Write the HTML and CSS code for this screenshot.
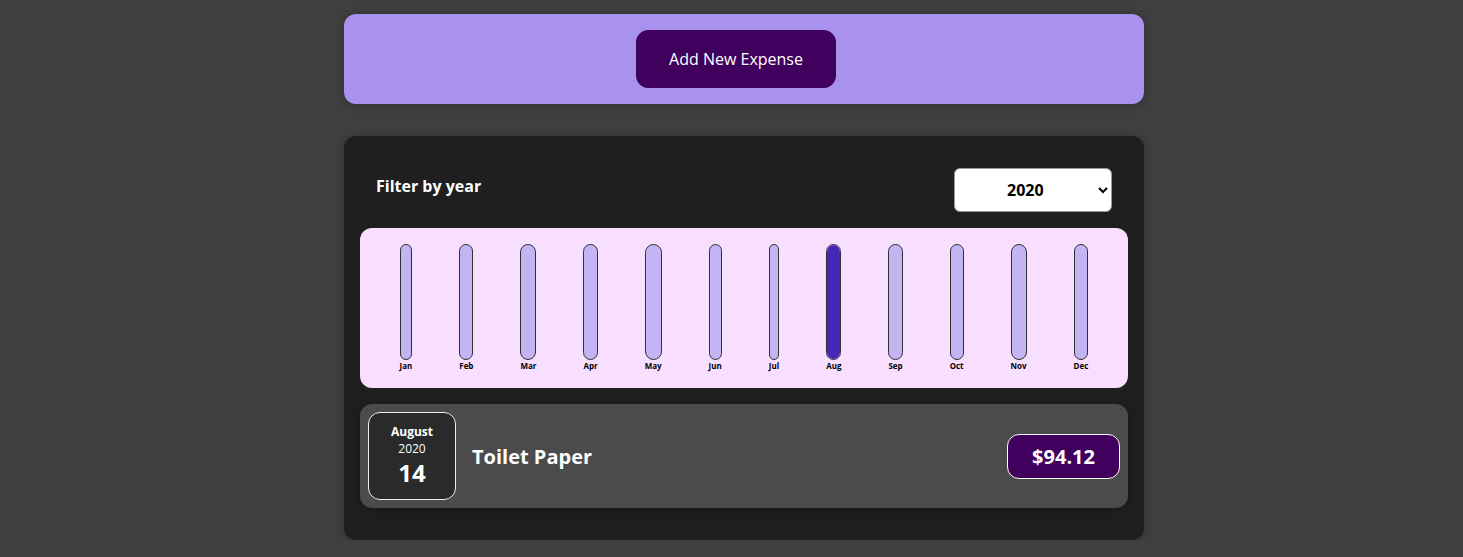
FILE: index.html
```html
<!DOCTYPE html>
<html lang="en">
<head>
    <meta charset="UTF-8">
    <meta name="viewport" content="width=device-width, initial-scale=1.0">
    <title>Expenses</title>
    <link rel="stylesheet" href="styles.css">
</head>
<body>
    <div class="new-expense">
        <button>Add New Expense</button>
    </div>
    <div class="expenses">
        <div class="expenses-filter">
            <div class="expenses-filter__control">
                <label>Filter by year</label>
                <select>
                    <option value="2022">2022</option>
                    <option value="2021">2021</option>
                    <option value="2020" selected>2020</option>
                    <option value="2019">2019</option>
                </select>
            </div>
        </div>
        <div class="chart">
            <div class="chart-bar"><div class="chart-bar__inner"></div><div class="chart-bar__label">Jan</div></div>
            <div class="chart-bar"><div class="chart-bar__inner"></div><div class="chart-bar__label">Feb</div></div>
            <div class="chart-bar"><div class="chart-bar__inner"></div><div class="chart-bar__label">Mar</div></div>
            <div class="chart-bar"><div class="chart-bar__inner"></div><div class="chart-bar__label">Apr</div></div>
            <div class="chart-bar"><div class="chart-bar__inner"></div><div class="chart-bar__label">May</div></div>
            <div class="chart-bar"><div class="chart-bar__inner"></div><div class="chart-bar__label">Jun</div></div>
            <div class="chart-bar"><div class="chart-bar__inner"></div><div class="chart-bar__label">Jul</div></div>
            <div class="chart-bar"><div class="chart-bar__inner"><div class="chart-bar__fill" style="height: 100%;"></div></div><div class="chart-bar__label">Aug</div></div>
            <div class="chart-bar"><div class="chart-bar__inner"></div><div class="chart-bar__label">Sep</div></div>
            <div class="chart-bar"><div class="chart-bar__inner"></div><div class="chart-bar__label">Oct</div></div>
            <div class="chart-bar"><div class="chart-bar__inner"></div><div class="chart-bar__label">Nov</div></div>
            <div class="chart-bar"><div class="chart-bar__inner"></div><div class="chart-bar__label">Dec</div></div>
        </div>
        <div class="expense-item">
            <div class="expense-date">
                <div class="expense-date__month">August</div>
                <div class="expense-date__year">2020</div>
                <div class="expense-date__day">14</div>
            </div>
            <div class="expense-item__description">
                <h2>Toilet Paper</h2>
                <div class="expense-item__price">$94.12</div>
            </div>
        </div>
    </div>
</body>
</html>
```

FILE: styles.css
```css
* {
    box-sizing: border-box;
}

body {
    font-family: "Open Sans", sans-serif;
    margin: 0;
    padding-left: 25px;
    background-color: #3f3f3f;
}

.new-expense {
    background-color: #a892ee;
    padding: 16px;
    margin: 14px auto 32px;
    width: 800px;
    border-radius: 12px;
    text-align: center;
    box-shadow: 0 1px 8px rgba(0, 0, 0, 0.25);
}

.new-expense button {
    font: inherit;
    font-size: 16px;
    cursor: pointer;
    padding: 16px 32px;
    border: 1px solid #40005d;
    background-color: #40005d;
    color: white;
    border-radius: 12px;
    margin-right: 16px;
    line-height: 24px;
}

.expenses {
    padding: 16px;
    background-color: #1f1f1f;
    margin: 0 auto;
    width: 800px;
    border-radius: 12px;
    box-shadow: 0 1px 8px rgba(0, 0, 0, 0.25);
}

.expenses-filter {
    color: white;
    padding: 0 16px;
}

.expenses-filter__control {
    display: flex;
    align-items: center;
    justify-content: space-between;
    margin: 16px 0;
}

.expenses-filter label {
    font-weight: bold;
    font-size: 16px;
    margin-bottom: 8px;
}

.expenses-filter select {
    font: inherit;
    font-size: 16px;
    font-weight: bold;
    height: 44px;
    width: 158px;
    padding: 0 40px 0 48px;
    border: 1px solid #999;
    border-radius: 6px;
    background-color: white;
}

.chart {
    padding: 16px;
    border-radius: 12px;
    background-color: #f8dfff;
    text-align: center;
    display: flex;
    justify-content: space-around;
    height: 160px;
}

.chart-bar {
    height: 100%;
    display: flex;
    flex-direction: column;
    align-items: center;
}

.chart-bar__inner {
    height: 100%;
    width: 100%;
    border: 1px solid #313131;
    border-radius: 12px;
    background-color: #c3b4f3;
    overflow: hidden;
    display: flex;
    flex-direction: column;
    justify-content: flex-end;
}

.chart-bar__fill {
    background-color: #4826b9;
    width: 100%;
}

.chart-bar__label {
    font-weight: bold;
    font-size: 8px;
    line-height: 12px;
    text-align: center;
}

.expense-item {
    display: flex;
    justify-content: space-between;
    align-items: center;
    box-shadow: 0 2px 8px rgba(0, 0, 0, 0.25);
    padding: 8px;
    margin: 16px 0;
    border-radius: 12px;
    background-color: #4b4b4b;
}

.expense-date {
    display: flex;
    flex-direction: column;
    width: 88px;
    height: 88px;
    border: 1px solid #ececec;
    background-color: #2a2a2a;
    color: white;
    border-radius: 12px;
    align-items: center;
    justify-content: center;
}

.expense-date__month {
    font-size: 12px;
    font-weight: bold;
}

.expense-date__year {
    font-size: 12px;
}

.expense-date__day {
    font-size: 24px;
    font-weight: bold;
    line-height: 32px;
}

.expense-item__description {
    display: flex;
    align-items: center;
    justify-content: flex-start;
    flex: 1;
}

.expense-item h2 {
    color: white;
    font-size: 20px;
    flex: 1;
    margin: 0 16px;
}

.expense-item__price {
    font-size: 20px;
    font-weight: bold;
    color: white;
    background-color: #40005d;
    border: 1px solid white;
    padding: 8px 24px;
    border-radius: 12px;
}
```
